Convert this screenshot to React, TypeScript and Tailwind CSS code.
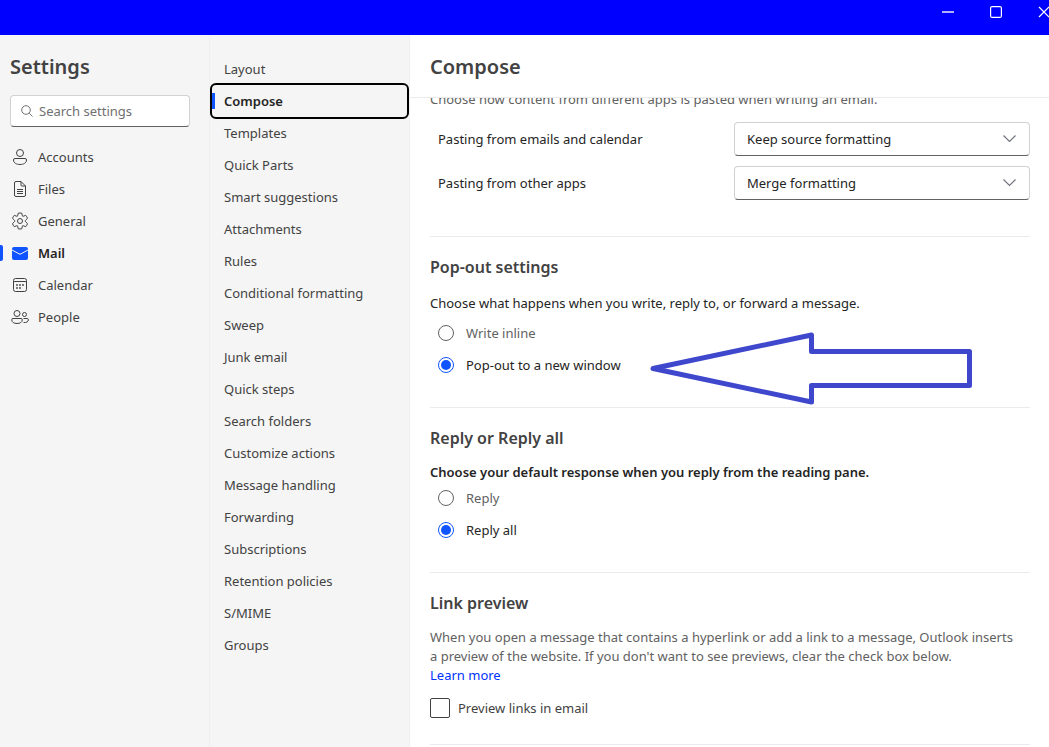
import { useState } from "react";
import type { ReactNode } from "react";

const categories: { name: string; icon: ReactNode }[] = [
  {
    name: "Accounts",
    icon: (
      <>
        <circle cx="10" cy="6" r="3.5" />
        <path d="M5 11.5h10a1.5 1.5 0 0 1 1.5 1.5c0 3-3 4.5-6.5 4.5S3.5 16 3.5 13A1.5 1.5 0 0 1 5 11.5Z" />
      </>
    ),
  },
  {
    name: "Files",
    icon: (
      <path d="M11 2.5H6A1.5 1.5 0 0 0 4.5 4v12A1.5 1.5 0 0 0 6 17.5h8a1.5 1.5 0 0 0 1.5-1.5V7L11 2.5Zm0 0V6a1 1 0 0 0 1 1h3.5M7 10.5h6M7 12.5h6M7 14.5h6" />
    ),
  },
  {
    name: "General",
    icon: (
      <>
        <path d="M8.2 2.2Q10 1.800 11.800 2.200L12.200 4.200a1.100 1.100 0 0 0 1.600.9l1.900-.8q1.200 1.300 1.800 3.100l-1.600 1.500a1.300 1.300 0 0 0 0 2.200l1.600 1.500q-.6 1.800-1.800 3.100l-1.900-.8a1.100 1.100 0 0 0-1.600.9l-.4 2q-1.800.4-3.600 0l-.4-2a1.100 1.100 0 0 0-1.600-.9l-1.900.8q-1.200-1.300-1.800-3.100l1.600-1.500a1.300 1.300 0 0 0 0-2.200L2.500 7.400q.6-1.800 1.800-3.100l1.900.8a1.100 1.100 0 0 0 1.600-.9Z" />
        <circle cx="10" cy="10" r="2.500" />
      </>
    ),
  },
  {
    name: "Mail",
    icon: (
      <>
        <rect x="2" y="4" width="16" height="13" rx="2" fill="#0f54ff" stroke="none" />
        <path d="M2 7l8 4.300L18 7" stroke="#f5f5f5" />
      </>
    ),
  },
  {
    name: "Calendar",
    icon: (
      <>
        <rect x="3.5" y="3.5" width="13" height="13" rx="2" />
        <path d="M3.5 6.500h13" />
        <path
          d="M7 13h0M10 13h0M7 10h0M10 10h0M13 10h0"
          strokeWidth="1.8"
          strokeLinecap="round"
        />
      </>
    ),
  },
  {
    name: "People",
    icon: (
      <>
        <circle cx="7" cy="6.5" r="3" />
        <circle cx="14.5" cy="7.5" r="2" />
        <path d="M3 11.5h8a1.300 1.300 0 0 1 1.300 1.300c0 2.500-2.300 3.700-5.300 3.700s-5.300-1.200-5.300-3.700A1.300 1.300 0 0 1 3 11.500ZM13.500 11.500h3.600a1.300 1.300 0 0 1 1.300 1.300c0 1.900-1.900 3-4.900 2.700" />
      </>
    ),
  },
];

const mailPages = [
  "Layout",
  "Compose",
  "Templates",
  "Quick Parts",
  "Smart suggestions",
  "Attachments",
  "Rules",
  "Conditional formatting",
  "Sweep",
  "Junk email",
  "Quick steps",
  "Search folders",
  "Customize actions",
  "Message handling",
  "Forwarding",
  "Subscriptions",
  "Retention policies",
  "S/MIME",
  "Groups",
];

function TitleBar() {
  return (
    <header className="flex h-[35px] shrink-0 items-start justify-end overflow-hidden bg-[#0000ff]">
      <div className="-mr-[19px] flex">
        <button aria-label="Minimize" className="flex h-6 w-12 items-center justify-center">
          <svg width="12" height="12" viewBox="0 0 12 12" fill="none" stroke="#b0b0ff" strokeWidth="2">
            <path d="M0 6h12" />
          </svg>
        </button>
        <button aria-label="Maximize" className="flex h-6 w-12 items-center justify-center">
          <svg width="12" height="12" viewBox="0 0 12 12" fill="none" stroke="white" strokeWidth="1.2">
            <rect x="0.6" y="0.6" width="10.8" height="10.8" rx="1.500" />
          </svg>
        </button>
        <button aria-label="Close" className="flex h-6 w-12 items-center justify-center">
          <svg width="12" height="12" viewBox="0 0 12 12" fill="none" stroke="white" strokeWidth="1.2">
            <path d="M1 1l10 10M11 1L1 11" />
          </svg>
        </button>
      </div>
    </header>
  );
}

function SelectRow(props: { id: string; label: string; options: string[] }) {
  return (
    <div className="flex items-center justify-between pl-2">
      <label htmlFor={props.id} className="text-[#242424]">
        {props.label}
      </label>
      <div className="relative w-[296px]">
        <select
          id={props.id}
          className="h-[34px] w-full appearance-none rounded border border-[#d1d1d1] border-b-[#616161] bg-white px-3 text-[#242424]"
        >
          {props.options.map((option) => (
            <option key={option}>{option}</option>
          ))}
        </select>
        <svg
          className="pointer-events-none absolute top-3 right-3.5"
          width="13"
          height="10"
          viewBox="0 0 13 10"
          fill="none"
          stroke="#70747c"
          strokeWidth="1.2"
        >
          <path d="M0.500 1.500l6 6 6-6" />
        </svg>
      </div>
    </div>
  );
}

function RadioGroup(props: { name: string; options: string[]; initial: string }) {
  const [value, setValue] = useState(props.initial);
  return (
    <div className="pl-2">
      {props.options.map((option) => (
        <label
          key={option}
          className="flex h-8 items-center gap-3 text-[#616161] has-checked:text-[#242424]"
        >
          <input
            type="radio"
            name={props.name}
            checked={value === option}
            onChange={() => setValue(option)}
            className="size-4 appearance-none rounded-full border border-[#616161] bg-white p-0.5 before:block before:size-full before:rounded-full checked:border-[#0f54ff] checked:before:bg-[#0f54ff]"
          />
          {option}
        </label>
      ))}
    </div>
  );
}

function SectionTitle(props: { children: ReactNode }) {
  return (
    <h3 className="text-base leading-[22px] font-semibold text-[#424242]">{props.children}</h3>
  );
}

function ArrowMark() {
  return (
    <svg
      className="pointer-events-none absolute top-[92px] left-[218px]"
      width="328"
      height="78"
      viewBox="0 0 328 78"
      fill="none"
      stroke="#3f48cc"
      strokeWidth="5"
    >
      <path strokeLinejoin="round" d="M5 39.5L163.5 6v16.5H321.5v34H163.5V73Z" />
    </svg>
  );
}

function App() {
  const [search, setSearch] = useState("");

  return (
    <div className="flex h-screen flex-col overflow-hidden bg-white font-['Noto_Sans',sans-serif] text-[13px] leading-5 text-[#424242]">
      <TitleBar />
      <div className="flex min-h-0 flex-1">
        <aside className="w-[209px] shrink-0 bg-[#f5f5f5]">
          <h1 className="px-2.5 pt-[18px] text-xl leading-7 font-semibold">Settings</h1>
          <div className="mx-2.5 my-3.5 flex h-8 items-center gap-1.5 rounded border border-[#d1d1d1] border-b-[#616161] bg-white px-2.5 w-[180px]">
            <svg
              className="shrink-0"
              width="12"
              height="12"
              viewBox="0 0 12 12"
              fill="none"
              stroke="#707070"
            >
              <circle cx="5" cy="5" r="4.3" />
              <path d="M8.2 8.2l3.3 3.3" />
            </svg>
            <input
              type="text"
              aria-label="Search settings"
              placeholder="Search settings"
              value={search}
              onChange={(e) => setSearch(e.target.value)}
              className="w-full min-w-0 outline-none placeholder:text-[#707070]"
            />
          </div>
          <nav>
            {categories.map((item) => (
              <a
                key={item.name}
                href="#"
                className={
                  "relative flex h-8 items-center gap-2 px-2.5 " +
                  (item.name === "Mail" ? "font-semibold text-[#242424]" : "")
                }
              >
                {item.name === "Mail" && (
                  <span className="absolute left-0 h-4 w-[3px] rounded-r-xs bg-[#0f54ff]" />
                )}
                <svg width="20" height="20" viewBox="0 0 20 20" fill="none" stroke="currentColor">
                  {item.icon}
                </svg>
                {item.name}
              </a>
            ))}
          </nav>
        </aside>

        <nav className="w-[201px] shrink-0 border-x border-[#f0f0f0] bg-[#f5f5f5] px-0.5 pt-[18px]">
          {mailPages.map((page) => (
            <a
              key={page}
              href="#"
              className={
                "relative flex h-8 items-center rounded-sm px-3 " +
                (page === "Compose" ? "font-semibold text-[#242424] outline-2 outline-black" : "")
              }
            >
              {page === "Compose" && (
                <span className="absolute left-0 h-4 w-[3px] bg-[#0f54ff]" />
              )}
              {page}
            </a>
          ))}
        </nav>

        <main className="flex min-w-0 flex-1 flex-col">
          <div className="h-[63px] shrink-0 border-b border-[#ebebeb] px-5 pt-[18px]">
            <h2 className="text-xl leading-7 font-semibold">Compose</h2>
          </div>
          <div className="min-h-0 flex-1 overflow-hidden pr-[19px] pl-5">
            <section className="-mt-[9px] border-b border-[#ebebeb] pb-9">
              <p className="text-[#616161]">
                Choose how content from different apps is pasted when writing an email.
              </p>
              <div className="mt-[13px] flex flex-col gap-2.5">
                <SelectRow
                  id="paste-email"
                  label="Pasting from emails and calendar"
                  options={["Keep source formatting", "Merge formatting", "Keep text only"]}
                />
                <SelectRow
                  id="paste-apps"
                  label="Pasting from other apps"
                  options={["Merge formatting", "Keep source formatting", "Keep text only"]}
                />
              </div>
            </section>

            <section className="relative border-b border-[#ebebeb] pt-[19px] pb-[26px]">
              <SectionTitle>Pop-out settings</SectionTitle>
              <p className="mt-[15px] mb-1 text-[#242424]">
                Choose what happens when you write, reply to, or forward a message.
              </p>
              <RadioGroup
                name="popout"
                options={["Write inline", "Pop-out to a new window"]}
                initial="Pop-out to a new window"
              />
              <ArrowMark />
            </section>

            <section className="border-b border-[#ebebeb] pt-[19px] pb-[26px]">
              <SectionTitle>Reply or Reply all</SectionTitle>
              <p className="mt-[13px] font-semibold text-[#242424]">
                Choose your default response when you reply from the reading pane.
              </p>
              <RadioGroup name="reply" options={["Reply", "Reply all"]} initial="Reply all" />
            </section>

            <section className="border-b border-[#ebebeb] pt-[19px] pb-5">
              <SectionTitle>Link preview</SectionTitle>
              <p className="mt-3.5 leading-[19px] text-[#616161]">
                When you open a message that contains a hyperlink or add a link to a message,
                Outlook inserts a&nbsp;preview of the website. If you don't want to see previews,
                clear the check box below.
              </p>
              <a href="#" className="block leading-[19px] text-[#0033ff]">
                Learn more
              </a>
              <label className="mt-[7px] flex h-8 items-center gap-2">
                <input
                  type="checkbox"
                  className="size-5 appearance-none rounded-xs border border-[#424242] bg-white checked:bg-[#0f54ff]"
                />
                Preview links in email
              </label>
            </section>
          </div>
        </main>
      </div>
    </div>
  );
}

export default App;
